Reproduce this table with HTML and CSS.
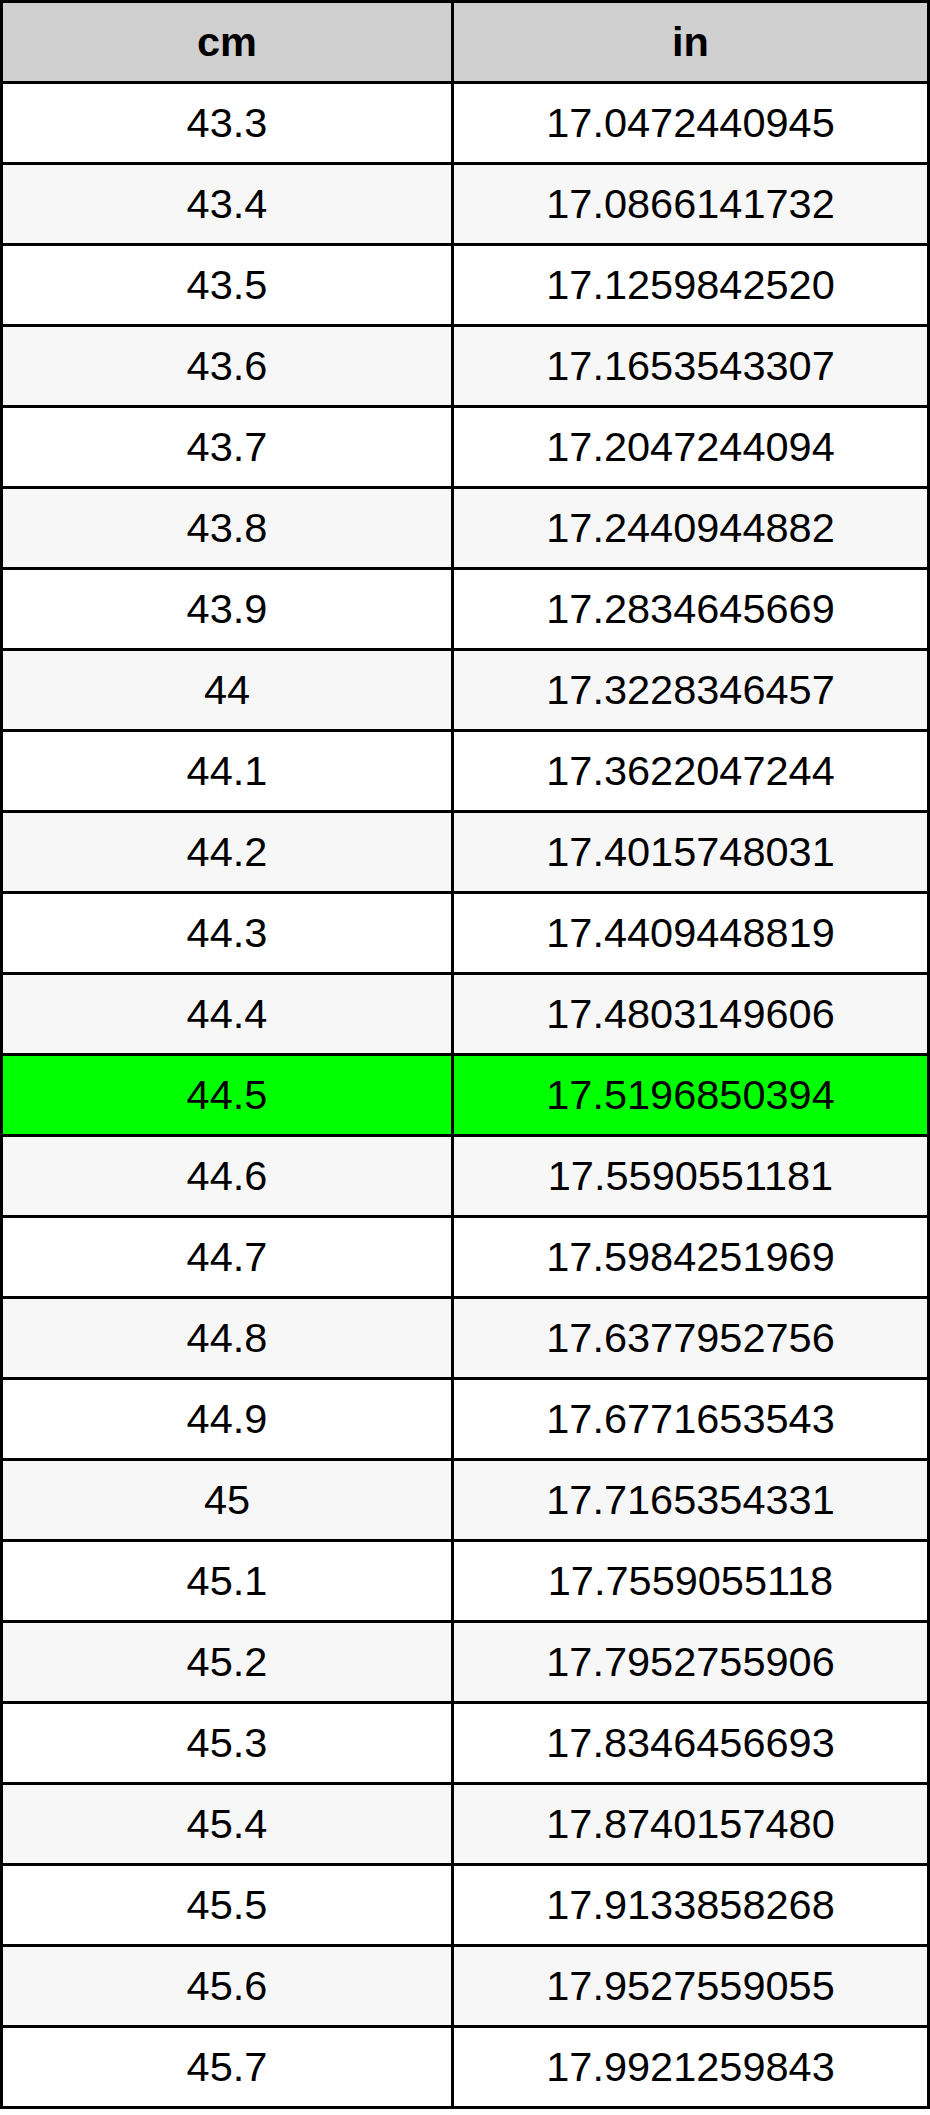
FILE: index.html
```html
<!DOCTYPE html>
<html>
<head>
<meta charset="utf-8">
<link rel="stylesheet" href="styles.css">
</head>
<body>
<div class="table">
  <div class="cell head">cm</div><div class="cell head">in</div>
  <div class="cell">43.3</div><div class="cell">17.0472440945</div>
  <div class="cell alt">43.4</div><div class="cell alt">17.0866141732</div>
  <div class="cell">43.5</div><div class="cell">17.1259842520</div>
  <div class="cell alt">43.6</div><div class="cell alt">17.1653543307</div>
  <div class="cell">43.7</div><div class="cell">17.2047244094</div>
  <div class="cell alt">43.8</div><div class="cell alt">17.2440944882</div>
  <div class="cell">43.9</div><div class="cell">17.2834645669</div>
  <div class="cell alt">44</div><div class="cell alt">17.3228346457</div>
  <div class="cell">44.1</div><div class="cell">17.3622047244</div>
  <div class="cell alt">44.2</div><div class="cell alt">17.4015748031</div>
  <div class="cell">44.3</div><div class="cell">17.4409448819</div>
  <div class="cell alt">44.4</div><div class="cell alt">17.4803149606</div>
  <div class="cell hl">44.5</div><div class="cell hl">17.5196850394</div>
  <div class="cell alt">44.6</div><div class="cell alt">17.5590551181</div>
  <div class="cell">44.7</div><div class="cell">17.5984251969</div>
  <div class="cell alt">44.8</div><div class="cell alt">17.6377952756</div>
  <div class="cell">44.9</div><div class="cell">17.6771653543</div>
  <div class="cell alt">45</div><div class="cell alt">17.7165354331</div>
  <div class="cell">45.1</div><div class="cell">17.7559055118</div>
  <div class="cell alt">45.2</div><div class="cell alt">17.7952755906</div>
  <div class="cell">45.3</div><div class="cell">17.8346456693</div>
  <div class="cell alt">45.4</div><div class="cell alt">17.8740157480</div>
  <div class="cell">45.5</div><div class="cell">17.9133858268</div>
  <div class="cell alt">45.6</div><div class="cell alt">17.9527559055</div>
  <div class="cell">45.7</div><div class="cell">17.9921259843</div>
</div>
</body>
</html>
```
FILE: styles.css
```css
html, body {
  margin: 0;
  padding: 0;
  background: #fff;
}
.table {
  display: grid;
  grid-template-columns: 448px 473px;
  grid-auto-rows: 78px;
  gap: 3px;
  padding: 3px;
  width: 930px;
  box-sizing: border-box;
  background: #000;
  font-family: "Liberation Sans", Arial, sans-serif;
  font-size: 41.5px;
  color: #000;
}
.cell {
  background: #fff;
  display: flex;
  align-items: center;
  justify-content: center;
}
.cell.alt {
  background: #f7f7f7;
}
.cell.head {
  background: #d0d0d0;
  font-weight: bold;
}
.cell.hl {
  background: #00ff00;
}
```
